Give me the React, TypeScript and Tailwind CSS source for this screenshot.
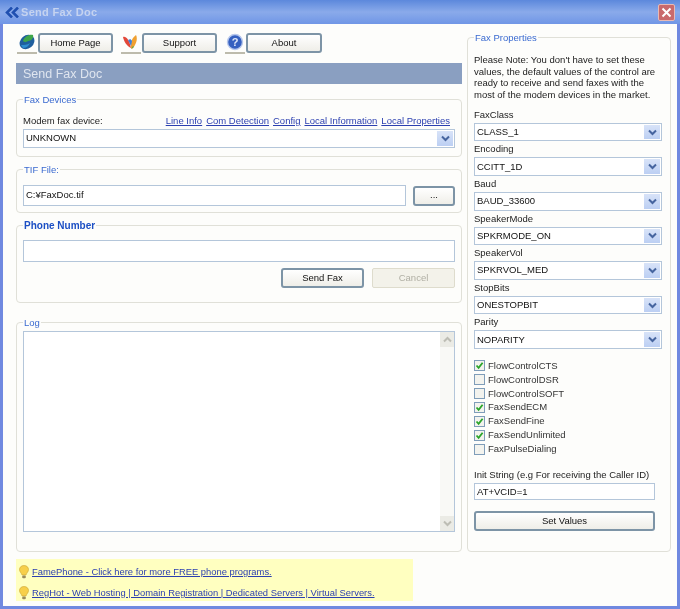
const font = "[font-family:'Liberation_Sans',sans-serif]";

function Chevron() {
  return (
    <span className="flex h-full w-[16px] shrink-0 items-center justify-center bg-gradient-to-b from-[#d8e3f8] to-[#bccff3]">
      <svg width="9" height="7" viewBox="0 0 9 7" fill="none">
        <path d="M1 1.5 L4.5 5 L8 1.5" stroke="#46659f" strokeWidth="2" />
      </svg>
    </span>
  );
}

function Combo({ value, className }: { value: string; className: string }) {
  return (
    <div className={`flex items-center border border-[#b4c6da] bg-white p-px pl-[2px] ${className}`}>
      <span className="flex-1 text-[9.5px] text-[#111]">{value}</span>
      <Chevron />
    </div>
  );
}

function XpButton({ label, className, disabled }: { label: string; className: string; disabled?: boolean }) {
  if (disabled) {
    return (
      <div className={`flex items-center justify-center rounded-[2px] border border-[#dedccd] bg-[#f3f2ea] text-[9.5px] text-[#b0afa4] ${className}`}>
        {label}
      </div>
    );
  }
  return (
    <div className={`flex items-center justify-center rounded-[3px] border-2 border-[#7d94a6] bg-gradient-to-b from-white to-[#efeee8] text-[9.5px] text-[#111] ${className}`}>
      {label}
    </div>
  );
}

function Group({ title, className, bold, children }: { title: string; className: string; bold?: boolean; children?: React.ReactNode }) {
  return (
    <fieldset className={`rounded-[4px] border border-[#e0e0d8] px-[6px] ${className}`}>
      <legend className={`h-[13px] px-px text-[9.5px] leading-[13px] ${bold ? "text-[10px] font-bold text-[#1c4fc4]" : "text-[#3a6ad0]"}`}>
        {title}
      </legend>
      {children}
    </fieldset>
  );
}

function IconTile({ children, className }: { children: React.ReactNode; className: string }) {
  return (
    <div className={`flex h-[21px] w-[20px] shrink-0 items-center justify-center border-b-2 border-[#bdbbac] ${className}`}>
      {children}
    </div>
  );
}

function Bulb() {
  return (
    <svg width="10" height="14" viewBox="0 0 10 14" className="shrink-0">
      <path d="M5 0.5 C2 0.5 0.5 2.5 0.5 4.6 C0.5 6.8 2.4 7.8 3 10 L7 10 C7.6 7.8 9.5 6.8 9.5 4.6 C9.5 2.5 8 0.5 5 0.5 Z" fill="#f7cf4a" stroke="#c9a233" strokeWidth="0.6" />
      <rect x="3.2" y="10.4" width="3.6" height="2.8" rx="1" fill="#9a8a5c" />
    </svg>
  );
}

function Field({ label, value }: { label: string; value: string }) {
  return (
    <div className="h-[34.6px]">
      <div className="h-[15px] text-[9.5px] leading-[14px] text-[#222]">{label}</div>
      <Combo value={value} className="h-[18.5px] w-[188px]" />
    </div>
  );
}

function Check({ label, checked }: { label: string; checked?: boolean }) {
  return (
    <div className="flex h-[13.9px] items-center gap-[3px] text-[9.5px] text-[#333]">
      <span className="flex size-[11px] items-center justify-center border border-[#7f9db9] bg-[#f3f3ee]">
        {checked && (
          <svg width="9" height="9" viewBox="0 0 9 9" fill="none">
            <path d="M1.5 4.5 L3.6 6.8 L7.6 1.8" stroke="#2aa52a" strokeWidth="1.8" />
          </svg>
        )}
      </span>
      {label}
    </div>
  );
}

export default function App() {
  return (
    <div className={`${font} h-[609px] w-[680px] overflow-hidden bg-[#fdfdfb] blur-[0.4px]`}>
      <div className="flex h-full flex-col border-x-[3px] border-b-[3px] border-[#7089e0]">
        {/* title bar */}
        <div className="-mx-[3px] flex h-[24px] shrink-0 items-center justify-between bg-gradient-to-b from-[#5c88dc] via-[#8aaaea] to-[#7096e6] pl-[5px] pr-[5px]">
          <div className="flex items-center gap-[1px]">
            <svg width="15" height="11" viewBox="0 0 15 11" fill="none">
              <path d="M7 0.5 L2 5.5 L7 10.5 M13 0.5 L8 5.5 L13 10.5" stroke="#1f4fb0" strokeWidth="2.6" />
            </svg>
            <span className="text-[11px] font-bold tracking-[0.3px] text-[#c5d3f0]">Send Fax Doc</span>
          </div>
          <div className="flex size-[17px] items-center justify-center rounded-[2px] border border-[#e8b9b4] bg-[#c96a6c]">
            <svg width="11" height="11" viewBox="0 0 11 11" fill="none">
              <path d="M1.5 1.5 L9.5 9.5 M9.5 1.5 L1.5 9.5" stroke="#fff" strokeWidth="2" />
            </svg>
          </div>
        </div>

        <div className="flex pl-[13px]">
          {/* left column */}
          <div className="w-[446px] pt-[9px]">
            <div className="flex h-[20px] items-center">
              <IconTile className="ml-[1px] mr-[1px]">
                <svg width="18" height="18" viewBox="0 0 18 18">
                  <ellipse cx="9" cy="9" rx="8" ry="6.5" transform="rotate(-40 9 9)" fill="#1f5f9e" />
                  <path d="M5 8 C6 4 11 1 15 2 C16 5 13 8 10 8 C8 9 7 10 5 8 Z" fill="#3fa64a" />
                  <path d="M3 12 C6 12 9 12 12 10 C11 13 8 15 5 15 Z" fill="#2f8fd0" />
                </svg>
              </IconTile>
              <XpButton label="Home Page" className="h-[20px] w-[75px]" />
              <IconTile className="ml-[8px] mr-px">
                <svg width="18" height="16" viewBox="0 0 18 16">
                  <path d="M1 3 C4 2 7 5 9 14 C5 12 2 8 1 3 Z" fill="#e2483a" />
                  <path d="M9 14 C8 9 10 4 14 1 C16 5 14 11 10 15 Z" fill="#f0a030" />
                  <path d="M6 6 C8 5 9 5 10 7 L9 12 C8 10 7 8 6 6 Z" fill="#3f7fd8" />
                  <path d="M9 15 L11 12 L12 13 Z" fill="#4aa84f" />
                </svg>
              </IconTile>
              <XpButton label="Support" className="h-[20px] w-[75px]" />
              <IconTile className="ml-[8px] mr-px">
                <svg width="18" height="18" viewBox="0 0 18 18">
                  <circle cx="9" cy="9" r="7.5" fill="#3560c0" stroke="#b8c8ec" strokeWidth="1.4" />
                  <text x="9" y="13" textAnchor="middle" fontSize="11" fontWeight="700" fill="#dfe7f8">?</text>
                </svg>
              </IconTile>
              <XpButton label="About" className="h-[20px] w-[76px]" />
            </div>

            <div className="mt-[10px] flex h-[21px] items-center bg-[#8a9fc1] pl-[7px] pt-[2px] text-[12.5px] text-[#dfe5ef]">
              Send Fax Doc
            </div>

            <Group title="Fax Devices" className="mt-[9px] h-[64px]">
              <div className="mt-[8px] flex h-[14px] items-center justify-between text-[9.5px]">
                <span className="text-[#222]">Modem fax device:</span>
                <span className="flex gap-[4px] pr-[5px] text-[#2b3fb0] underline">
                  <span>Line Info</span>
                  <span>Com Detection</span>
                  <span>Config</span>
                  <span>Local Information</span>
                  <span>Local Properties</span>
                </span>
              </div>
              <Combo value="UNKNOWN" className="mt-px h-[19px] w-full" />
            </Group>

            <Group title="TIF File:" className="mt-[6px] h-[50px]">
              <div className="mt-[9px] flex items-center justify-between">
                <div className="flex h-[21px] w-[383px] items-center border border-[#b4c6da] bg-white pl-[2px] text-[9.5px] text-[#111]">
                  C:¥FaxDoc.tif
                </div>
                <XpButton label="..." className="h-[20px] w-[42px]" />
              </div>
            </Group>

            <Group title="Phone Number" bold className="mt-[6px] h-[84px]">
              <div className="mt-[8px] h-[22px] border border-[#b4c6da] bg-white" />
              <div className="mt-[6px] flex justify-end gap-[8px]">
                <XpButton label="Send Fax" className="h-[20px] w-[83px]" />
                <XpButton label="Cancel" disabled className="h-[20px] w-[83px]" />
              </div>
            </Group>

            <Group title="Log" className="mt-[13px] h-[236px]">
              <div className="mt-[2px] flex h-[201px] justify-end border border-[#b4c6da] bg-white">
                <div className="flex w-[14px] flex-col justify-between bg-[#f9f9f6]">
                  <div className="flex h-[15px] items-center justify-center bg-[#ebebe5]">
                    <svg width="9" height="7" viewBox="0 0 9 7" fill="none">
                      <path d="M1 5.5 L4.5 2 L8 5.5" stroke="#bdbdb4" strokeWidth="2" />
                    </svg>
                  </div>
                  <div className="flex h-[15px] items-center justify-center bg-[#ebebe5]">
                    <svg width="9" height="7" viewBox="0 0 9 7" fill="none">
                      <path d="M1 1.5 L4.5 5 L8 1.5" stroke="#bdbdb4" strokeWidth="2" />
                    </svg>
                  </div>
                </div>
              </div>
            </Group>

            <div className="mt-[7px] h-[42px] w-[397px] bg-[#ffffc0] pl-[3px] pt-[3px] text-[9.4px] text-[#2b3fb0]">
              <div className="flex h-[20.5px] items-center gap-[3px]">
                <Bulb />
                <span className="underline">FamePhone - Click here for more FREE phone programs.</span>
              </div>
              <div className="flex h-[20.5px] items-center gap-[3px]">
                <Bulb />
                <span className="underline">RegHot - Web Hosting | Domain Registration | Dedicated Servers | Virtual Servers.</span>
              </div>
            </div>
          </div>

          {/* right column */}
          <div className="ml-[5px] pt-[7px]">
            <Group title="Fax Properties" className="h-[521px] w-[202px]">
              <p className="mt-[10px] w-[190px] text-[9.5px] leading-[11.7px] text-[#222]">
                Please Note: You don't have to set these values, the default values of the control are ready to receive and send faxes with the most of the modem devices in the market.
              </p>
              <div className="mt-[7px]">
                <Field label="FaxClass" value="CLASS_1" />
                <Field label="Encoding" value="CCITT_1D" />
                <Field label="Baud" value="BAUD_33600" />
                <Field label="SpeakerMode" value="SPKRMODE_ON" />
                <Field label="SpeakerVol" value="SPKRVOL_MED" />
                <Field label="StopBits" value="ONESTOPBIT" />
                <Field label="Parity" value="NOPARITY" />
              </div>
              <div className="mt-[9px]">
                <Check label="FlowControlCTS" checked />
                <Check label="FlowControlDSR" />
                <Check label="FlowControlSOFT" />
                <Check label="FaxSendECM" checked />
                <Check label="FaxSendFine" checked />
                <Check label="FaxSendUnlimited" checked />
                <Check label="FaxPulseDialing" />
              </div>
              <div className="mt-[12px] h-[15px] text-[9.5px] leading-[14px] text-[#222]">Init String (e.g For receiving the Caller ID)</div>
              <div className="flex h-[17px] w-[181px] items-center border border-[#b4c6da] bg-white pl-[2px] text-[9.5px] text-[#111]">AT+VCID=1</div>
              <XpButton label="Set Values" className="mt-[11px] h-[20px] w-[181px]" />
            </Group>
          </div>
        </div>
      </div>
    </div>
  );
}
